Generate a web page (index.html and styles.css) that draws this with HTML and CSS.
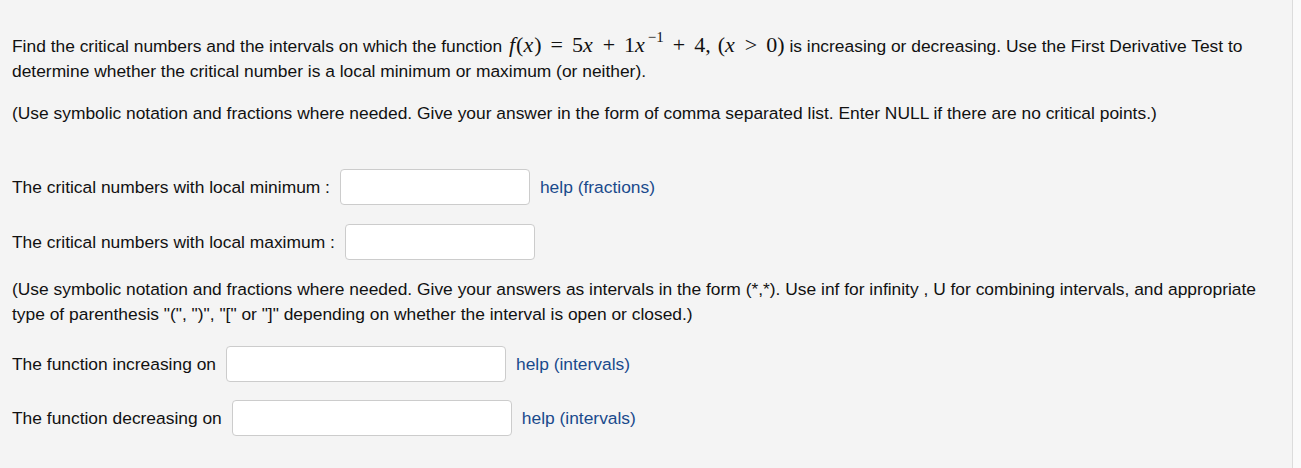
FILE: index.html
```html
<!DOCTYPE html>
<html>
<head>
<meta charset="utf-8">
<link rel="stylesheet" href="styles.css">
</head>
<body>
<div class="panel">
  <p class="para first">Find the critical numbers and the intervals on which the function <span class="math"><i>f</i>(<i>x</i>)<span class="op">=</span>5<i>x</i><span class="op">+</span>1<i>x</i><sup>&minus;1</sup><span class="op">+</span>4,<span class="sp"></span>(<i>x</i><span class="op">&gt;</span>0)</span> is increasing or decreasing. Use the First Derivative Test to determine whether the critical number is a local minimum or maximum (or neither).</p>
  <p class="para p2">(Use symbolic notation and fractions where needed. Give your answer in the form of comma separated list. Enter NULL if there are no critical points.)</p>
  <div class="row r1"><span class="label">The critical numbers with local minimum :</span><span class="field"></span><a class="help">help (fractions)</a></div>
  <div class="row r2"><span class="label">The critical numbers with local maximum :</span><span class="field"></span></div>
  <p class="para p3">(Use symbolic notation and fractions where needed. Give your answers as intervals in the form (*,*). Use inf for infinity , U for combining intervals, and appropriate type of parenthesis "(", ")", "[" or "]" depending on whether the interval is open or closed.)</p>
  <div class="row r3"><span class="label">The function increasing on</span><span class="field wide"></span><a class="help">help (intervals)</a></div>
  <div class="row r4"><span class="label">The function decreasing on</span><span class="field wide"></span><a class="help">help (intervals)</a></div>
</div>
</body>
</html>
```
FILE: styles.css
```css
html, body {
  margin: 0;
  padding: 0;
  background: #fafafa;
}
body {
  font-family: "Liberation Sans", Arial, sans-serif;
  font-size: 17.4px;
  color: #111;
}
.panel {
  width: 1293px;
  height: 468px;
  box-sizing: border-box;
  background: #f4f4f4;
  border-right: 1px solid #dcdcdc;
  padding: 0 0 0 12px;
  display: flex;
  flex-direction: column;
  align-items: flex-start;
}
.para {
  margin: 0;
  line-height: 25px;
  width: 1270px;
}
.first { margin-top: 34px; }
.p2 { margin-top: 17px; }
.p3 { margin-top: 17px; }
.math {
  font-family: "Liberation Serif", "Times New Roman", serif;
  font-size: 22px;
  line-height: 0;
  white-space: nowrap;
  margin-left: 2px;
}
.math i { font-style: italic; padding-right: 1px; }
.math .op { padding: 0 9px; }
.math .sp { display: inline-block; width: 7px; }
.math sup {
  font-size: 15px;
  line-height: 0;
  vertical-align: 10px;
  padding-left: 2px;
}
.row {
  display: flex;
  align-items: center;
  gap: 10px;
}
.r1 { margin-top: 43px; }
.r2 { margin-top: 19px; }
.r3 { margin-top: 19px; }
.r4 { margin-top: 18px; }
.field {
  display: block;
  width: 188px;
  height: 34px;
  background: #fff;
  border: 1px solid #ccc;
  border-radius: 4px;
}
.field.wide { width: 278px; }
.help {
  color: #1a4a8c;
  text-decoration: none;
}
```
